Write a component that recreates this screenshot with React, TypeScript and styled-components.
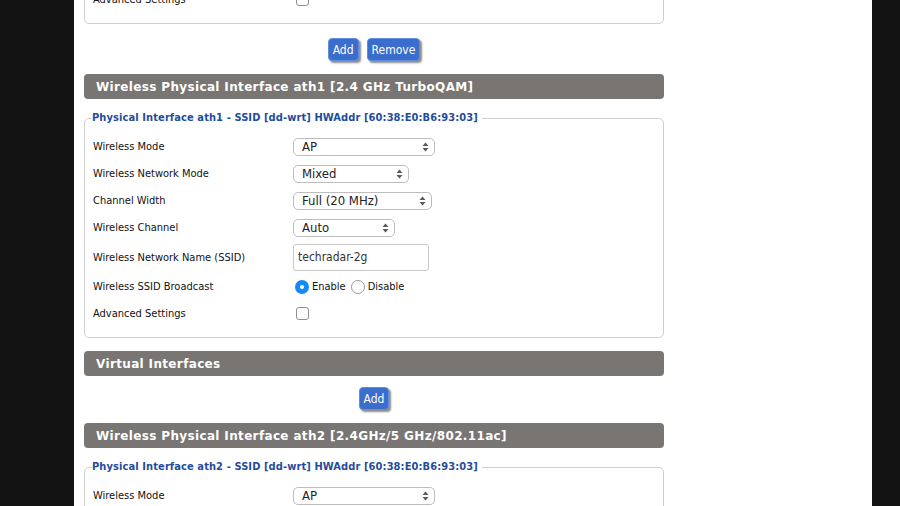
import React from "react";
import styled, { createGlobalStyle } from "styled-components";

const FONT = `"DejaVu Sans Condensed", "DejaVu Sans", sans-serif`;
const WIDE = `"DejaVu Sans", "Verdana", sans-serif`;

const Global = createGlobalStyle`
  html, body { margin: 0; padding: 0; background: #131313; overflow: hidden; }
  body { font-family: ${FONT}; }
`;

const Shell = styled.div`
  display: flex;
  justify-content: flex-start;
  height: 506px;
`;

const Side = styled.div<{ $w: number }>`
  width: ${(p) => p.$w}px;
  flex: none;
  background: #131313;
`;

const Main = styled.div`
  width: 798px;
  flex: none;
  background: #ffffff;
  padding: 0 10px;
  box-sizing: border-box;
  overflow: hidden;
`;

const Column = styled.div`
  width: 580px;
  display: flex;
  flex-direction: column;
`;

const Fieldset = styled.fieldset<{ $top?: number }>`
  margin: ${(p) => p.$top ?? 0}px 0 0 0;
  padding: 8px 8px 10px 8px;
  border: 1px solid #cfcfcf;
  border-radius: 5px;
  min-width: 0;
`;

const Legend = styled.legend`
  padding: 0 4px 0 0;
  margin-left: -1px;
  font-family: ${FONT};
  font-weight: bold;
  font-size: 11px;
  line-height: 14px;
  letter-spacing: 0.1px;
  color: #1f4d9d;
`;

const Row = styled.div<{ $h?: number }>`
  display: flex;
  align-items: center;
  height: ${(p) => p.$h ?? 27}px;
`;

const Label = styled.div`
  width: 200px;
  flex: none;
  font-size: 11px;
  color: #111;
`;

const SelectBox = styled.div<{ $w: number }>`
  width: ${(p) => p.$w}px;
  height: 18px;
  box-sizing: border-box;
  border: 1px solid #bdbdbd;
  border-radius: 5px;
  display: flex;
  align-items: center;
  justify-content: space-between;
  padding: 0 5px 0 8px;
  font-size: 13px;
  color: #222;
  background: #fff;
`;

const TextInput = styled.div`
  width: 136px;
  height: 27px;
  box-sizing: border-box;
  border: 1px solid #c8c8c8;
  border-radius: 3px;
  display: flex;
  align-items: center;
  padding: 0 4px;
  font-size: 12px;
  color: #333;
`;

const RadioGroup = styled.div`
  display: flex;
  align-items: center;
  gap: 3px;
  font-size: 11px;
  color: #111;
`;

const Radio = styled.span<{ $on?: boolean }>`
  width: 14px;
  height: 14px;
  box-sizing: border-box;
  border-radius: 50%;
  border: ${(p) => (p.$on ? "none" : "1px solid #9a9a9a")};
  background: ${(p) => (p.$on ? "#1689f5" : "#fff")};
  display: inline-flex;
  align-items: center;
  justify-content: center;
  margin-left: 2px;
  &::after {
    content: "";
    display: ${(p) => (p.$on ? "block" : "none")};
    width: 4px;
    height: 4px;
    border-radius: 50%;
    background: #fff;
  }
`;

const Check = styled.span`
  width: 13px;
  height: 13px;
  box-sizing: border-box;
  margin-left: 3px;
  border: 1px solid #8f8f8f;
  border-radius: 3px;
  background: #fff;
`;

const ButtonRow = styled.div<{ $mt: number; $mb: number }>`
  display: flex;
  justify-content: center;
  gap: 8px;
  margin: ${(p) => p.$mt}px 0 ${(p) => p.$mb}px 0;
`;

const Button = styled.button`
  height: 23px;
  padding: 0 4px;
  border: 1px solid #5f8ee0;
  border-radius: 4px;
  background: #3a6dcc;
  color: #fff;
  font-family: ${FONT};
  font-size: 12px;
  box-shadow: 2px 2px 2px #8c8c8c;
  cursor: pointer;
`;

const Header = styled.div<{ $mt?: number }>`
  height: 25px;
  flex: none;
  margin-top: ${(p) => p.$mt ?? 0}px;
  border-radius: 4px;
  background: #787573;
  color: #fff;
  display: flex;
  align-items: center;
  padding-left: 12px;
  font-family: ${WIDE};
  font-weight: bold;
  font-size: 12px;
  letter-spacing: 0.35px;
`;

const Spacer = styled.div<{ $h: number }>`
  height: ${(p) => p.$h}px;
  flex: none;
`;

const Arrows = () => (
  <svg width="7" height="10" viewBox="0 0 7 10">
    <path d="M3.5 0.5 L6.5 4 L0.5 4 Z" fill="#5a5a5a" />
    <path d="M3.5 9.5 L6.5 6 L0.5 6 Z" fill="#5a5a5a" />
  </svg>
);

const Select = ({ w, v }: { w: number; v: string }) => (
  <SelectBox $w={w}>
    <span>{v}</span>
    <Arrows />
  </SelectBox>
);

const Broadcast = () => (
  <Row>
    <Label>Wireless SSID Broadcast</Label>
    <RadioGroup>
      <Radio $on />
      <span>Enable</span>
      <Radio />
      <span>Disable</span>
    </RadioGroup>
  </Row>
);

const Advanced = () => (
  <Row>
    <Label>Advanced Settings</Label>
    <Check />
  </Row>
);

const InterfaceFields = ({ legend }: { legend: string }) => (
  <Fieldset>
    <Legend>{legend}</Legend>
    <Row>
      <Label>Wireless Mode</Label>
      <Select w={142} v="AP" />
    </Row>
    <Row>
      <Label>Wireless Network Mode</Label>
      <Select w={116} v="Mixed" />
    </Row>
    <Row>
      <Label>Channel Width</Label>
      <Select w={139} v="Full (20 MHz)" />
    </Row>
    <Row>
      <Label>Wireless Channel</Label>
      <Select w={102} v="Auto" />
    </Row>
    <Row $h={32}>
      <Label>Wireless Network Name (SSID)</Label>
      <TextInput>techradar-2g</TextInput>
    </Row>
    <Broadcast />
    <Advanced />
  </Fieldset>
);

export default function App() {
  return (
    <>
      <Global />
      <Shell>
        <Side $w={74} />
        <Main>
          <Column>
            <Fieldset $top={-50}>
              <Broadcast />
              <Advanced />
            </Fieldset>
            <ButtonRow $mt={14} $mb={13}>
              <Button>Add</Button>
              <Button>Remove</Button>
            </ButtonRow>
            <Header>Wireless Physical Interface ath1 [2.4 GHz TurboQAM]</Header>
            <Spacer $h={12} />
            <InterfaceFields legend="Physical Interface ath1 - SSID [dd-wrt] HWAddr [60:38:E0:B6:93:03]" />
            <Header $mt={13}>Virtual Interfaces</Header>
            <ButtonRow $mt={11} $mb={13}>
              <Button>Add</Button>
            </ButtonRow>
            <Header>Wireless Physical Interface ath2 [2.4GHz/5 GHz/802.11ac]</Header>
            <Spacer $h={12} />
            <InterfaceFields legend="Physical Interface ath2 - SSID [dd-wrt] HWAddr [60:38:E0:B6:93:03]" />
          </Column>
        </Main>
        <Side $w={28} />
      </Shell>
    </>
  );
}
